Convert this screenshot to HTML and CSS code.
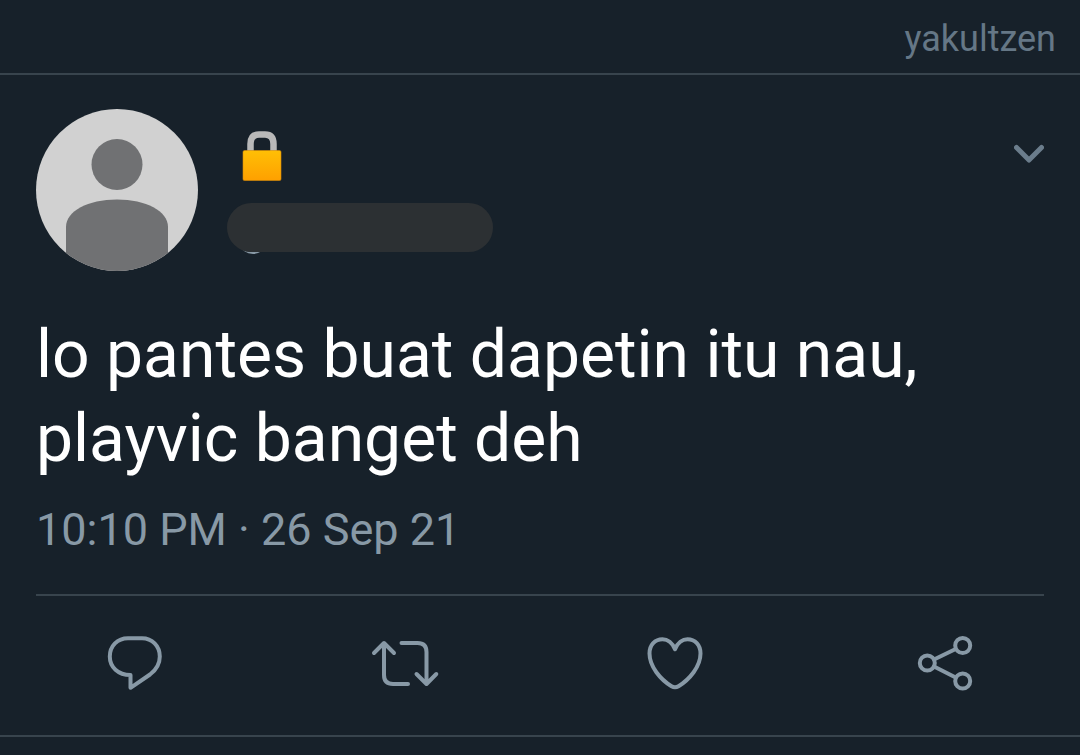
FILE: index.html
```html
<!DOCTYPE html>
<html lang="id">
<head>
    <meta charset="UTF-8">
    <meta name="viewport" content="width=device-width, initial-scale=1.0">
    <title>Tweet</title>
    <link rel="stylesheet" href="styles.css">
</head>
<body>

    <header class="topbar">yakultzen</header>

    <article class="tweet">
        <div class="author">
            <svg class="avatar" viewBox="0 0 162 162" role="img" aria-label="Avatar">
                <clipPath id="circle"><circle cx="81" cy="81" r="81"/></clipPath>
                <g clip-path="url(#circle)">
                    <rect width="162" height="162" fill="#d1d1d1"/>
                    <circle cx="81" cy="55.500" r="25.500" fill="#707173"/>
                    <path d="M30 162V118C30 102 52 90.500 81 90.500S132 102 132 118V162z" fill="#707173"/>
                </g>
            </svg>
            <div class="names">
                <svg class="lock" viewBox="0 0 40 52" role="img" aria-label="Locked">
                    <linearGradient id="gold" x1="0" y1="0" x2="0" y2="1">
                        <stop offset="0" stop-color="#ffbf05"/>
                        <stop offset="1" stop-color="#ffa000"/>
                    </linearGradient>
                    <path d="M8.500 22V14Q8.500 4.500 17 4.500H23Q31.500 4.500 31.500 14V22" fill="none" stroke="#b9b9b9" stroke-width="6.500"/>
                    <rect x="1" y="20.500" width="38" height="30" rx="1.500" fill="url(#gold)" stroke="#d98c08" stroke-width="0.600"/>
                </svg>
                <div class="handle"></div>
            </div>
            <button class="more" aria-label="More">
                <svg width="30" height="20" viewBox="0 0 30 20"><path d="M2.500 3.500L15 16L27.500 3.500"/></svg>
            </button>
        </div>

        <p class="text">lo pantes buat dapetin itu nau, playvic banget deh</p>
        <time class="date" datetime="2021-09-26T22:10">10:10 PM · 26 Sep 21</time>
    </article>

    <div class="actions">
        <button aria-label="Reply">
            <svg viewBox="0 0 72 72"><path d="M31.500 48V60.800L51 47.500C57 43 60.800 36.500 60.800 29.500C60.800 19 53 11.200 43 11.200H29C18.500 11.200 10.800 19 10.800 29.500C10.800 40 19 48 31.500 48z"/></svg>
        </button>
        <button aria-label="Retweet">
            <svg viewBox="0 0 72 72"><path d="M5 26L15 16L25 26M15 17V48Q15 57 24 57H39M32.500 16H48.500Q57.500 16 57.500 25V56.500M47.500 47L57.500 57L67.300 47"/></svg>
        </button>
        <button aria-label="Like">
            <svg viewBox="0 0 72 72"><path d="M36 22.300C33.500 16 28.500 12.300 23.500 12.300C16 12.300 10.500 18 10.500 26.500C10.500 39.500 21.500 52.500 32.500 59.200Q36 61.400 39.500 59.200C50.500 52.500 61.500 39.500 61.500 26.500C61.500 18 56 12.300 48.500 12.300C43.500 12.300 38.500 16 36 22.300z"/></svg>
        </button>
        <button aria-label="Share">
            <svg viewBox="0 0 72 72"><circle cx="18.300" cy="36" r="7.500"/><circle cx="53.700" cy="18.500" r="7.500"/><circle cx="53.700" cy="54" r="7.500"/><path d="M25 32.500L46.700 22M25 39.500L46.700 50.500"/></svg>
        </button>
    </div>

</body>
</html>
```
FILE: styles.css
```css
* {
    margin: 0;
    padding: 0;
    box-sizing: border-box;
}
body {
    background-color: #17212a;
    color: white;
    font-family: Roboto, sans-serif;
}
button {
    background: none;
    border: none;
    cursor: pointer;
}
svg {
    display: block;
}
.topbar {
    padding: 18px 24px 13px;
    border-bottom: 2px solid #38444d;
    color: #657786;
    font-size: 36px;
    line-height: 42px;
    text-align: right;
}
.tweet {
    margin: 0 36px;
    padding: 34px 0 38px;
    border-bottom: 2px solid #38444d;
}
.author {
    display: flex;
    align-items: flex-start;
    gap: 29px;
}
.avatar {
    width: 162px;
    height: 162px;
    flex-shrink: 0;
}
.names {
    flex: 1;
    padding-top: 21px;
    isolation: isolate;
}
.lock {
    width: 40px;
    height: 52px;
    margin-left: 15px;
}
.handle {
    position: relative;
    max-width: 266px;
    height: 49px;
    margin-top: 21px;
    border-radius: 25px;
    background-color: #2c3033;
}
/* edge of the @ sign under the bar */
.handle::before {
    content: "";
    position: absolute;
    z-index: -1;
    left: 14px;
    bottom: -2px;
    width: 24px;
    height: 16px;
    border-bottom: 2px solid #8899a6;
    border-radius: 50%;
}
.more {
    padding-top: 35px;
}
.more svg {
    fill: none;
    stroke: #6b7d8c;
    stroke-width: 5;
    stroke-linecap: round;
    stroke-linejoin: round;
}
.text {
    margin-top: 42px;
    font-size: 66px;
    line-height: 84px;
}
.date {
    display: block;
    margin-top: 23px;
    color: #8899a6;
    font-size: 45px;
    line-height: 52px;
}
.actions {
    display: grid;
    grid-template-columns: repeat(4, 1fr);
    justify-items: center;
    padding: 31px 0 36px;
    border-bottom: 2px solid #38444d;
}
.actions svg {
    width: 72px;
    height: 72px;
    fill: none;
    stroke: #8899a6;
    stroke-width: 4;
    stroke-linecap: round;
    stroke-linejoin: round;
}
```
